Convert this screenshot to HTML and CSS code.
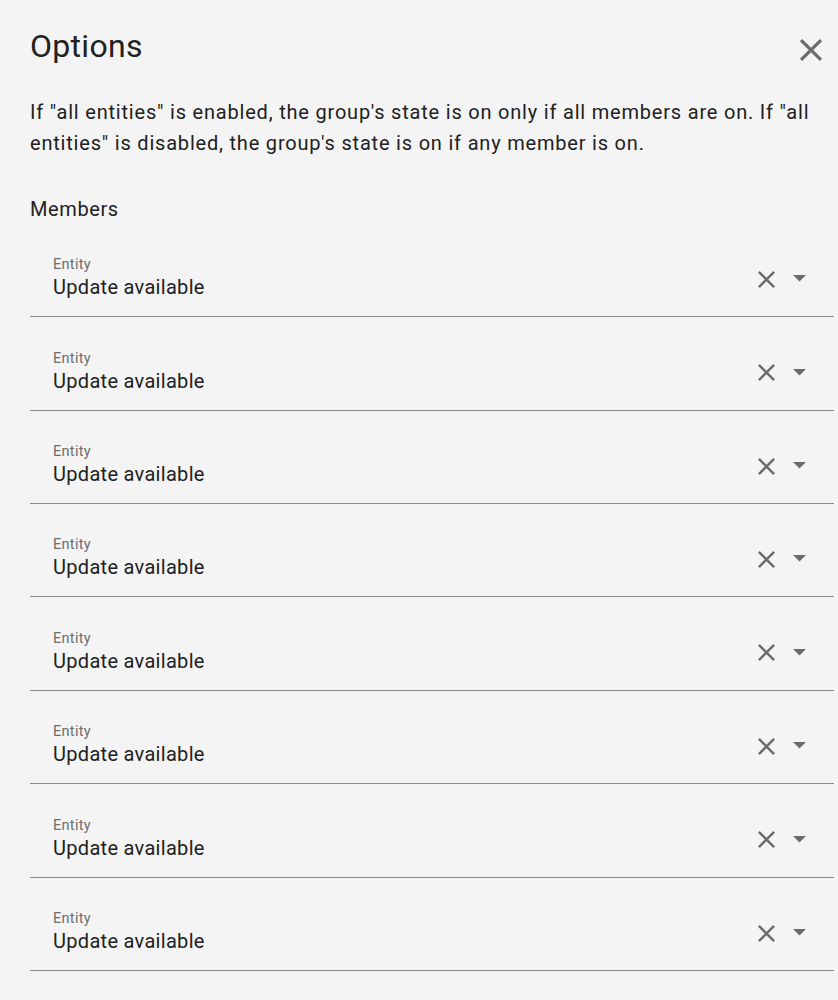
FILE: index.html
```html
<!DOCTYPE html>
<html>
<head>
<meta charset="utf-8">
<link rel="stylesheet" href="styles.css">
</head>
<body>
<div class="dialog">
  <div class="header">
    <h1 class="title">Options</h1>
    <button class="close" aria-label="Close">
      <svg viewBox="0 0 24 24" width="38" height="38"><path d="M19 6.41L17.59 5 12 10.59 6.41 5 5 6.41 10.59 12 5 17.59 6.41 19 12 13.41 17.59 19 19 17.59 13.41 12z"/></svg>
    </button>
  </div>
  <p class="desc">If "all entities" is enabled, the group's state is on only if all members are on. If "all entities" is disabled, the group's state is on if any member is on.</p>
  <div class="section-label">Members</div>
  <div class="fields">
    <div class="field"><div class="text"><div class="label">Entity</div><div class="value">Update available</div></div><div class="icons"><svg class="clear" viewBox="0 0 24 24"><path d="M19 6.41L17.59 5 12 10.59 6.41 5 5 6.41 10.59 12 5 17.59 6.41 19 12 13.41 17.59 19 19 17.59 13.41 12z"/></svg><svg class="drop" viewBox="0 0 24 24"><path d="M7 10l5 5 5-5z"/></svg></div></div>
    <div class="field"><div class="text"><div class="label">Entity</div><div class="value">Update available</div></div><div class="icons"><svg class="clear" viewBox="0 0 24 24"><path d="M19 6.41L17.59 5 12 10.59 6.41 5 5 6.41 10.59 12 5 17.59 6.41 19 12 13.41 17.59 19 19 17.59 13.41 12z"/></svg><svg class="drop" viewBox="0 0 24 24"><path d="M7 10l5 5 5-5z"/></svg></div></div>
    <div class="field"><div class="text"><div class="label">Entity</div><div class="value">Update available</div></div><div class="icons"><svg class="clear" viewBox="0 0 24 24"><path d="M19 6.41L17.59 5 12 10.59 6.41 5 5 6.41 10.59 12 5 17.59 6.41 19 12 13.41 17.59 19 19 17.59 13.41 12z"/></svg><svg class="drop" viewBox="0 0 24 24"><path d="M7 10l5 5 5-5z"/></svg></div></div>
    <div class="field"><div class="text"><div class="label">Entity</div><div class="value">Update available</div></div><div class="icons"><svg class="clear" viewBox="0 0 24 24"><path d="M19 6.41L17.59 5 12 10.59 6.41 5 5 6.41 10.59 12 5 17.59 6.41 19 12 13.41 17.59 19 19 17.59 13.41 12z"/></svg><svg class="drop" viewBox="0 0 24 24"><path d="M7 10l5 5 5-5z"/></svg></div></div>
    <div class="field"><div class="text"><div class="label">Entity</div><div class="value">Update available</div></div><div class="icons"><svg class="clear" viewBox="0 0 24 24"><path d="M19 6.41L17.59 5 12 10.59 6.41 5 5 6.41 10.59 12 5 17.59 6.41 19 12 13.41 17.59 19 19 17.59 13.41 12z"/></svg><svg class="drop" viewBox="0 0 24 24"><path d="M7 10l5 5 5-5z"/></svg></div></div>
    <div class="field"><div class="text"><div class="label">Entity</div><div class="value">Update available</div></div><div class="icons"><svg class="clear" viewBox="0 0 24 24"><path d="M19 6.41L17.59 5 12 10.59 6.41 5 5 6.41 10.59 12 5 17.59 6.41 19 12 13.41 17.59 19 19 17.59 13.41 12z"/></svg><svg class="drop" viewBox="0 0 24 24"><path d="M7 10l5 5 5-5z"/></svg></div></div>
    <div class="field"><div class="text"><div class="label">Entity</div><div class="value">Update available</div></div><div class="icons"><svg class="clear" viewBox="0 0 24 24"><path d="M19 6.41L17.59 5 12 10.59 6.41 5 5 6.41 10.59 12 5 17.59 6.41 19 12 13.41 17.59 19 19 17.59 13.41 12z"/></svg><svg class="drop" viewBox="0 0 24 24"><path d="M7 10l5 5 5-5z"/></svg></div></div>
    <div class="field"><div class="text"><div class="label">Entity</div><div class="value">Update available</div></div><div class="icons"><svg class="clear" viewBox="0 0 24 24"><path d="M19 6.41L17.59 5 12 10.59 6.41 5 5 6.41 10.59 12 5 17.59 6.41 19 12 13.41 17.59 19 19 17.59 13.41 12z"/></svg><svg class="drop" viewBox="0 0 24 24"><path d="M7 10l5 5 5-5z"/></svg></div></div>
  </div>
</div>
</body>
</html>
```

FILE: styles.css
```css
html, body {
  margin: 0;
  padding: 0;
  background: #f4f4f4;
}
body {
  font-family: Roboto, "Liberation Sans", sans-serif;
  color: #212121;
}
.dialog {
  padding: 26px 4px 0 30px;
}
.header {
  display: flex;
  justify-content: space-between;
  align-items: flex-start;
  height: 40px;
}
.title {
  margin: 0;
  font-size: 32px;
  line-height: 40px;
  font-weight: 400;
  letter-spacing: 0.3px;
}
.close {
  border: 0;
  background: none;
  padding: 0;
  margin: 5px 4px 0 0;
  width: 38px;
  height: 38px;
  display: block;
}
.close svg {
  display: block;
  fill: #6b6b6b;
}
.desc {
  margin: 31px 0 0 0;
  font-size: 20px;
  line-height: 31px;
  letter-spacing: 0.8px;
  padding-right: 0;
}
.section-label {
  margin-top: 34.7px;
  font-size: 20px;
  line-height: 31px;
  letter-spacing: 0.6px;
}
.fields {
  display: flex;
  flex-direction: column;
  gap: 28px;
  margin-top: 27px;
}
.field {
  height: 65.43px;
  box-sizing: border-box;
  border-bottom: 1px solid #8a8a8a;
  display: flex;
  justify-content: space-between;
  padding: 4.5px 19px 0 23px;
}
.label {
  font-size: 14.5px;
  line-height: 18px;
  color: #6e6e6e;
  letter-spacing: 0.3px;
}
.value {
  margin-top: 1px;
  font-size: 20px;
  line-height: 24px;
  letter-spacing: 0.3px;
  color: #212121;
}
.icons {
  display: flex;
  align-items: center;
  gap: 3px;
  margin-top: 8px;
  height: 30px;
}
.clear {
  width: 29px;
  height: 29px;
  fill: #6b6b6b;
}
.drop {
  width: 31px;
  height: 31px;
  fill: #6b6b6b;
  margin-top: -3px;
}
```
